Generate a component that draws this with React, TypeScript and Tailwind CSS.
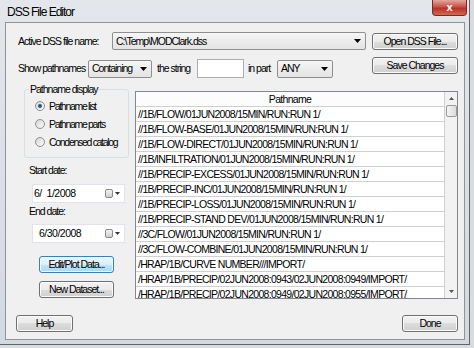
import React from "react";

const pathnames = [
  "//1B/FLOW/01JUN2008/15MIN/RUN:RUN 1/",
  "//1B/FLOW-BASE/01JUN2008/15MIN/RUN:RUN 1/",
  "//1B/FLOW-DIRECT/01JUN2008/15MIN/RUN:RUN 1/",
  "//1B/INFILTRATION/01JUN2008/15MIN/RUN:RUN 1/",
  "//1B/PRECIP-EXCESS/01JUN2008/15MIN/RUN:RUN 1/",
  "//1B/PRECIP-INC/01JUN2008/15MIN/RUN:RUN 1/",
  "//1B/PRECIP-LOSS/01JUN2008/15MIN/RUN:RUN 1/",
  "//1B/PRECIP-STAND DEV/01JUN2008/15MIN/RUN:RUN 1/",
  "//3C/FLOW/01JUN2008/15MIN/RUN:RUN 1/",
  "//3C/FLOW-COMBINE/01JUN2008/15MIN/RUN:RUN 1/",
  "/HRAP/1B/CURVE NUMBER///IMPORT/",
  "/HRAP/1B/PRECIP/02JUN2008:0943/02JUN2008:0949/IMPORT/",
  "/HRAP/1B/PRECIP/02JUN2008:0949/02JUN2008:0955/IMPORT/",
];

function Arrow() {
  return (
    <svg width="7" height="4" viewBox="0 0 7 4" className="shrink-0">
      <polygon points="0,0 7,0 3.5,4" fill="#000" />
    </svg>
  );
}

function WinButton({ children, className = "", focused = false }: { children: React.ReactNode; className?: string; focused?: boolean }) {
  const look = focused
    ? "border-[#3c7fb1] bg-[linear-gradient(#eaf6fd_0%,#d9f0fc_50%,#bee6fd_50%,#a7d9f5_100%)] shadow-[inset_0_0_0_1px_#f0fbff]"
    : "border-[#707070] bg-[linear-gradient(#f2f2f2_0%,#ebebeb_50%,#dddddd_50%,#cfcfcf_100%)] shadow-[inset_0_0_0_1px_#fbfbfb]";
  return (
    <button className={`h-[17px] rounded-[3px] border flex items-center justify-center leading-none text-black whitespace-nowrap ${look} ${className}`}>
      {children}
    </button>
  );
}

function Combo({ value, className = "" }: { value: string; className?: string }) {
  return (
    <div className={`h-[18px] rounded-[2px] border border-[#8e8f8f] bg-[linear-gradient(#f6f6f6,#e3e3e3)] flex items-center justify-between pl-[3px] pr-[4px] ${className}`}>
      <span>{value}</span>
      <Arrow />
    </div>
  );
}

function DateBox({ value, textClass = "" }: { value: string; textClass?: string }) {
  return (
    <div className="ml-[8px] w-[93px] h-[19px] border border-[#e2e3ea] bg-white flex items-center justify-between pl-[1px] pr-[4px]">
      <span className={`whitespace-pre tracking-[-0.5px] ${textClass}`}>{value}</span>
      <div className="flex items-center gap-[2px]">
        <span className="w-[8px] h-[9px] rounded-[2px] border border-[#8a8a8a] bg-[linear-gradient(#f4f4f4,#cfcfcf)]" />
        <svg width="5" height="3" viewBox="0 0 5 3">
          <polygon points="0,0 5,0 2.5,3" fill="#333" />
        </svg>
      </div>
    </div>
  );
}

function Radio({ label, checked = false }: { label: string; checked?: boolean }) {
  return (
    <div className="h-[18px] flex items-center">
      <span className="ml-[10px] w-[10px] h-[10px] rounded-full border border-[#8e8f8f] bg-[linear-gradient(135deg,#d6d6d6,#fbfbfb)] flex items-center justify-center">
        {checked && <span className="w-[4px] h-[4px] rounded-full bg-[#24597f]" />}
      </span>
      <span className="ml-[4px] tracking-[-1.3px]">{label}</span>
    </div>
  );
}

export default function App() {
  return (
    <div className="w-[474px] h-[348px] bg-[#d9dcdf] overflow-hidden font-['Liberation_Sans',Arial,sans-serif] text-[10.5px] leading-[13px] tracking-[-1px] whitespace-nowrap text-black">
      {/* Window */}
      <div className="w-[470px] h-[345px] border-r border-b border-[#5f646b] bg-[linear-gradient(#e3e7ec,#d3d9e0)] flex flex-col">
        {/* Title bar */}
        <div className="h-[22px] shrink-0 flex items-start justify-between">
          <span className="pl-[7px] pt-[5px] text-[12px] leading-[14px] tracking-[-1px]">DSS File Editor</span>
          <div className="mr-[2px] w-[35px] h-[16px] rounded-b-[4px] border border-t-0 border-[#7a2a24] bg-[linear-gradient(#e5a59d,#c85448_45%,#b8322a_55%,#cf6a52)] flex items-center justify-center text-white font-bold text-[11px] leading-none tracking-normal">
            x
          </div>
        </div>

        {/* Client area */}
        <div className="ml-[5px] mr-[4px] mb-[4px] flex-1 border border-[#8d949c] bg-[#f0f0f0] flex flex-col">
          {/* Row 1 */}
          <div className="mt-[9px] h-[18px] flex items-center pl-[12px]">
            <span className="w-[94px]">Active DSS file name:</span>
            <Combo value="C:\Temp\MODClark.dss" className="w-[254px]" />
            <WinButton className="ml-[6px] w-[86px]">Open DSS File...</WinButton>
          </div>

          {/* Row 2 */}
          <div className="mt-[7px] flex items-start pl-[12px]">
            <div className="mt-[2px] h-[19px] flex items-center">
              <span className="w-[70px]">Show pathnames</span>
              <Combo value="Containing" className="w-[64px]" />
              <span className="ml-[5px] w-[40px]">the string</span>
              <div className="w-[47px] h-[19px] border border-[#abadb3] bg-white" />
              <span className="ml-[4px] w-[29px]">in part</span>
              <Combo value="ANY" className="w-[56px]" />
            </div>
            <WinButton className="ml-[39px] w-[86px]">Save Changes</WinButton>
          </div>

          {/* Main area */}
          <div className="mt-[5px] flex items-start">
            {/* Left column */}
            <div className="ml-[18px] w-[105px] flex flex-col">
              <fieldset className="border border-[#d5dfe5] rounded-[3px] px-0 pb-[6px]">
                <legend className="ml-[4px] px-[1px]">Pathname display</legend>
                <div className="pt-[1px]">
                  <Radio label="Pathname list" checked />
                  <Radio label="Pathname parts" />
                  <Radio label="Condensed catalog" />
                </div>
              </fieldset>

              <span className="mt-[6px] ml-[5px]">Start date:</span>
              <div className="mt-[7px]">
                <DateBox value="6/  1/2008" />
              </div>
              <span className="mt-[2px] ml-[5px]">End date:</span>
              <div className="mt-[6px]">
                <DateBox value="6/30/2008" textClass="ml-[5px]" />
              </div>

              <WinButton focused className="mt-[13px] ml-[15px] w-[75px]">Edit/Plot Data...</WinButton>
              <WinButton className="mt-[8px] ml-[15px] w-[75px]">New Dataset...</WinButton>
            </div>

            {/* Pathname table */}
            <div className="ml-[6px] mt-[8px] w-[323px] h-[208px] border border-[#828790] bg-white flex overflow-hidden tracking-[-0.7px]">
              <div className="flex-1 flex flex-col overflow-hidden">
                <div className="h-[15px] shrink-0 border-b border-r border-[#d0d0d0] bg-[#fcfcfc] flex items-center justify-center">
                  Pathname
                </div>
                {pathnames.map((p) => (
                  <div key={p} className="h-[15px] shrink-0 border-b border-r border-[#d0d0d0] pl-[2px] flex items-center">
                    {p}
                  </div>
                ))}
              </div>
              <div className="w-[12px] shrink-0 bg-[#f2f2f2] flex flex-col items-center">
                <div className="h-[13px] flex items-center justify-center">
                  <svg width="5" height="3" viewBox="0 0 5 3">
                    <polygon points="0,3 5,3 2.5,0" fill="#555" />
                  </svg>
                </div>
                <div className="w-[11px] h-[12px] rounded-[2px] border border-[#9a9a9a] bg-[linear-gradient(90deg,#f4f4f4,#dcdcdc)]" />
                <div className="flex-1" />
                <div className="h-[13px] flex items-center justify-center">
                  <svg width="5" height="3" viewBox="0 0 5 3">
                    <polygon points="0,0 5,0 2.5,3" fill="#555" />
                  </svg>
                </div>
              </div>
            </div>
          </div>

          {/* Bottom buttons */}
          <div className="mt-auto mb-[7px] flex items-center justify-between pl-[10px] pr-[6px]">
            <WinButton className="w-[57px]">Help</WinButton>
            <WinButton className="w-[56px]">Done</WinButton>
          </div>
        </div>
      </div>
    </div>
  );
}
